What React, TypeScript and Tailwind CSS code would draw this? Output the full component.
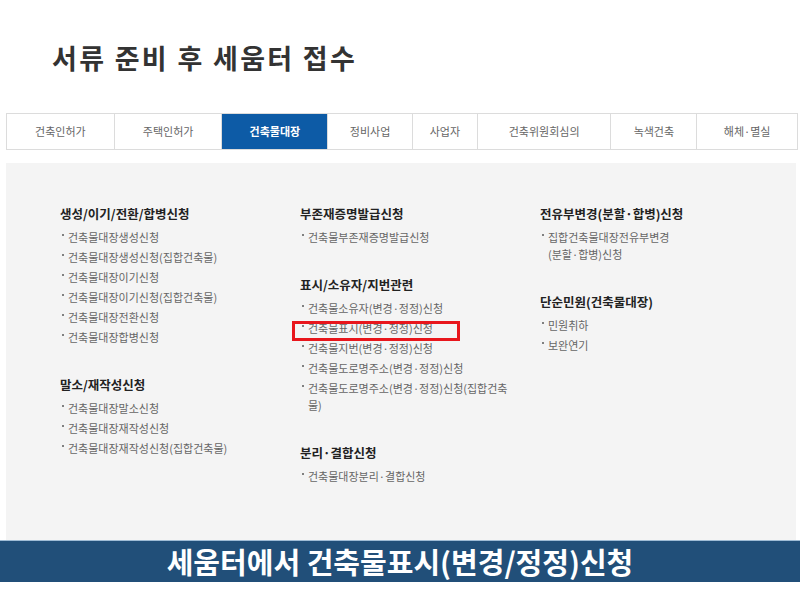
const font = { fontFamily: '"Noto Sans CJK KR", "Noto Sans", sans-serif' };

type Group = { title: string; items: string[] };

const tabs: { label: string; w: string; active?: boolean }[] = [
  { label: "건축인허가", w: "w-[107px]" },
  { label: "주택인허가", w: "w-[108px]" },
  { label: "건축물대장", w: "w-[106px]", active: true },
  { label: "정비사업", w: "w-[85px]" },
  { label: "사업자", w: "w-[65px]" },
  { label: "건축위원회심의", w: "w-[134px]" },
  { label: "녹색건축", w: "w-[86px]" },
  { label: "해체·멸실", w: "w-[101px]" },
];

const columns: Group[][] = [
  [
    {
      title: "생성/이기/전환/합병신청",
      items: [
        "건축물대장생성신청",
        "건축물대장생성신청(집합건축물)",
        "건축물대장이기신청",
        "건축물대장이기신청(집합건축물)",
        "건축물대장전환신청",
        "건축물대장합병신청",
      ],
    },
    {
      title: "말소/재작성신청",
      items: [
        "건축물대장말소신청",
        "건축물대장재작성신청",
        "건축물대장재작성신청(집합건축물)",
      ],
    },
  ],
  [
    { title: "부존재증명발급신청", items: ["건축물부존재증명발급신청"] },
    {
      title: "표시/소유자/지번관련",
      items: [
        "건축물소유자(변경·정정)신청",
        "건축물표시(변경·정정)신청",
        "건축물지번(변경·정정)신청",
        "건축물도로명주소(변경·정정)신청",
        "건축물도로명주소(변경·정정)신청(집합건축\n물)",
      ],
    },
    { title: "분리·결합신청", items: ["건축물대장분리·결합신청"] },
  ],
  [
    {
      title: "전유부변경(분할·합병)신청",
      items: ["집합건축물대장전유부변경\n(분할·합병)신청"],
    },
    { title: "단순민원(건축물대장)", items: ["민원취하", "보완연기"] },
  ],
];

const highlighted = "건축물표시(변경·정정)신청";

function Item({ text }: { text: string }) {
  return (
    <li className="relative flex text-[11px] leading-[17px] text-[#666]">
      <span className="mt-[5px] mr-[4px] ml-[2px] h-[2px] w-[2px] shrink-0 bg-[#808080]" />
      <span className="w-[215px] whitespace-pre-line">{text}</span>
      {text === highlighted && (
        <span className="absolute left-[-8px] top-[1px] h-[20px] w-[168px] border-[3px] border-[#e8161c]" />
      )}
    </li>
  );
}

export default function App() {
  return (
    <main className="h-[600px] w-[800px] overflow-hidden bg-white" style={font}>
      <h1 className="pl-[52px] pt-[41px] text-[27px] font-bold leading-[34px] tracking-[2.3px] text-[#333]">
        서류 준비 후 세움터 접수
      </h1>

      <nav className="ml-[6px] mt-[38px] flex h-[37px] w-[792px] border border-[#dcdcdc]">
        {tabs.map((t, i) => (
          <div
            key={t.label}
            className={`${t.w} flex items-center justify-center text-[11px] ${
              i > 0 ? "border-l border-[#dcdcdc]" : ""
            } ${t.active ? "bg-[#0d5ba6] font-bold text-white" : "text-[#666]"}`}
          >
            {t.label}
          </div>
        ))}
      </nav>

      <section className="ml-[6px] mt-[13px] flex h-[377px] w-[790px] bg-[#f4f4f4] pl-[54px] pt-[41px]">
        {columns.map((col, ci) => (
          <div key={ci} className="flex w-[240px] flex-col gap-[29px]">
            {col.map((g) => (
              <div key={g.title}>
                <h3 className="text-[12.5px] font-bold leading-[20px] text-[#222]">
                  {g.title}
                </h3>
                <ul className="mt-[5px] flex flex-col gap-[3px]">
                  {g.items.map((it) => (
                    <Item key={it} text={it} />
                  ))}
                </ul>
              </div>
            ))}
          </div>
        ))}
      </section>

      <div className="flex h-[42px] items-center justify-center border-t border-[#9fbcd6] bg-[#214f79]">
        <span className="text-[29px] font-bold leading-none text-white">
          세움터에서 건축물표시(변경/정정)신청
        </span>
      </div>
    </main>
  );
}
